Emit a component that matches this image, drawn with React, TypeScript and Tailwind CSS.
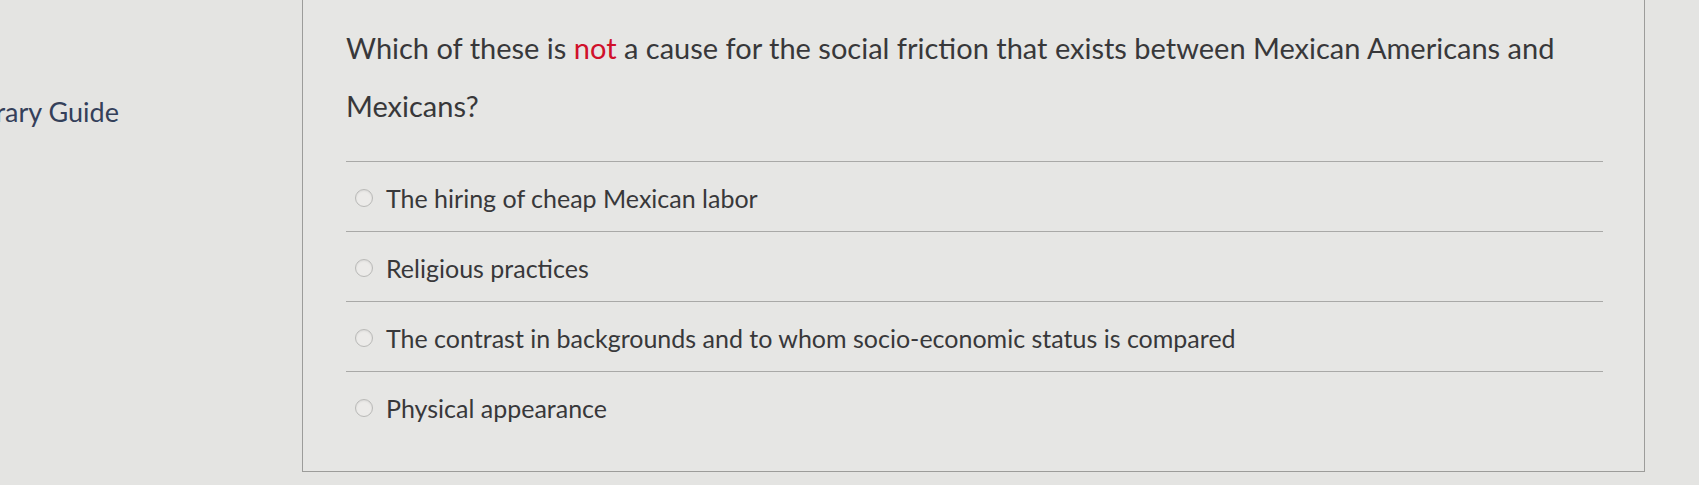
import React from 'react';

const options = [
  'The hiring of cheap Mexican labor',
  'Religious practices',
  'The contrast in backgrounds and to whom socio-economic status is compared',
  'Physical appearance',
];

function Radio() {
  return (
    <span className="w-[18px] h-[18px] rounded-full border border-[#b9b9b7] bg-[#ecebe9] shadow-[inset_0_1px_2px_rgba(0,0,0,0.08)] shrink-0" />
  );
}

export default function App() {
  return (
    <div
      className="w-[1699px] h-[485px] bg-[#e4e4e2] flex overflow-hidden text-[#38383a]"
      style={{ fontFamily: 'Lato, "Open Sans", sans-serif' }}
    >
      <aside className="w-[302px] shrink-0 overflow-hidden pt-[92px]">
        <div className="ml-[-40px] whitespace-nowrap text-[27px] text-[#34405a]">Library Guide</div>
      </aside>

      <main className="w-[1343px] h-[472px] shrink-0 border-l border-r border-b border-[#9c9c9a] bg-[#e6e6e4] pl-[43px] pr-[41px] pt-[19px]">
        <p className="text-[29px] leading-[58px]">
          Which of these is <span className="text-[#d0112b]">not</span> a cause for the social friction that exists
          between Mexican Americans and Mexicans?
        </p>

        <div className="mt-[26px] border-t border-[#a9a9a7]">
          {options.map((opt, i) => (
            <div
              key={opt}
              className={`flex items-center gap-[13px] pl-[9px] pt-[20px] pb-[17px] ${
                i < options.length - 1 ? 'border-b border-[#a9a9a7]' : ''
              }`}
            >
              <Radio />
              <span className="text-[25px] leading-[32px]">{opt}</span>
            </div>
          ))}
        </div>
      </main>
    </div>
  );
}
